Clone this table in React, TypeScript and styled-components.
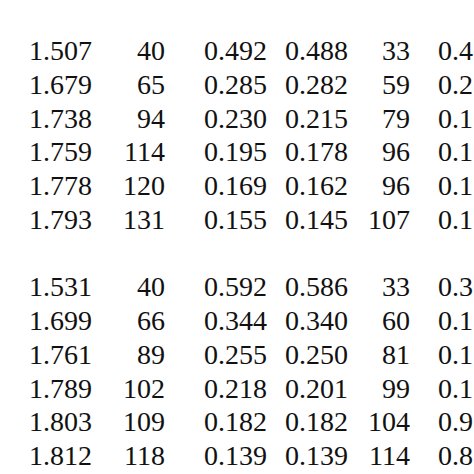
import styled, { createGlobalStyle } from 'styled-components';

const GlobalStyle = createGlobalStyle`
  html, body {
    margin: 0;
    padding: 0;
    background: #ffffff;
    overflow: hidden;
  }
`;

type TRow = [string, string, string, string, string, string];

// last column is cut by the picture's edge, only the visible part is kept
const BLOCKS: TRow[][] = [
  [
    ['1.507', '40', '0.492', '0.488', '33', '0.4'],
    ['1.679', '65', '0.285', '0.282', '59', '0.2'],
    ['1.738', '94', '0.230', '0.215', '79', '0.1'],
    ['1.759', '114', '0.195', '0.178', '96', '0.1'],
    ['1.778', '120', '0.169', '0.162', '96', '0.1'],
    ['1.793', '131', '0.155', '0.145', '107', '0.1'],
  ],
  [
    ['1.531', '40', '0.592', '0.586', '33', '0.3'],
    ['1.699', '66', '0.344', '0.340', '60', '0.1'],
    ['1.761', '89', '0.255', '0.250', '81', '0.1'],
    ['1.789', '102', '0.218', '0.201', '99', '0.1'],
    ['1.803', '109', '0.182', '0.182', '104', '0.9'],
    ['1.812', '118', '0.139', '0.139', '114', '0.8'],
  ],
];

const App = () => {
  return (
    <>
      <GlobalStyle />
      <Page>
        <Table>
          {BLOCKS.map((block, b) => (
            <Block key={b}>
              {block.map((row, r) => (
                <Row key={r}>
                  {row.map((cell, c) => (
                    <Cell key={c}>{cell}</Cell>
                  ))}
                </Row>
              ))}
            </Block>
          ))}
        </Table>
      </Page>
    </>
  );
};

const Page = styled.div`
  width: 474px;
  height: 474px;
  overflow: hidden;
  background: #ffffff;
  padding: 34px 0 0 29px;
  box-sizing: border-box;
`;

const Table = styled.div`
  display: flex;
  flex-direction: column;
  gap: 33.75px;
`;

const Block = styled.div`
  display: flex;
  flex-direction: column;
`;

const Row = styled.div`
  display: grid;
  grid-template-columns: 63px 73px 102px 81px 62px 63px;
  height: 33.75px;
`;

const Cell = styled.span`
  font-family: 'Liberation Serif', 'Times New Roman', serif;
  font-size: 28px;
  line-height: 33.75px;
  color: #111111;
  text-align: right;
  white-space: nowrap;
`;

export default App;
